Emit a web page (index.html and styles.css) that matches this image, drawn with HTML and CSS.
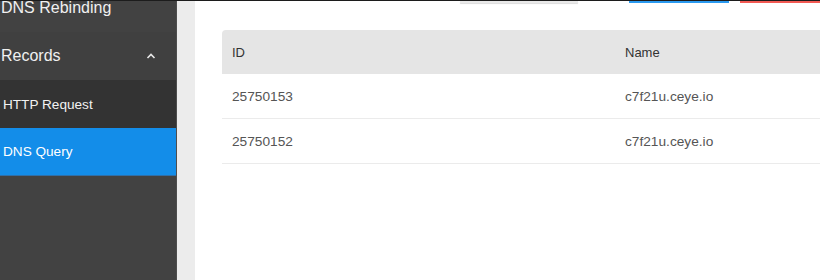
FILE: index.html
```html
<!DOCTYPE html>
<html>
<head>
<meta charset="utf-8">
<link rel="stylesheet" href="styles.css">
</head>
<body>
<div class="topline"></div>
<div class="layout">
  <nav class="sidebar">
    <div class="nav-item">DNS Rebinding</div>
    <div class="nav-item nav-group">
      <span>Records</span>
      <svg class="chev" width="10" height="6" viewBox="0 0 10 6"><polyline points="1.5,5 5,1.5 8.5,5" fill="none" stroke="#e8e8e8" stroke-width="1.6"/></svg>
    </div>
    <div class="nav-sub">HTTP Request</div>
    <div class="nav-sub active">DNS Query</div>
  </nav>
  <div class="gutter"></div>
  <main class="panel">
    <div class="toolbar">
      <div class="btn btn-gray"></div>
      <div class="btn btn-blue"></div>
      <div class="btn btn-red"></div>
    </div>
    <table class="records">
      <thead>
        <tr><th class="col-id">ID</th><th>Name</th></tr>
      </thead>
      <tbody>
        <tr><td>25750153</td><td>c7f21u.ceye.io</td></tr>
        <tr><td>25750152</td><td>c7f21u.ceye.io</td></tr>
      </tbody>
    </table>
  </main>
</div>
</body>
</html>
```
FILE: styles.css
```css
html, body {
  margin: 0;
  padding: 0;
  height: 100%;
  overflow: hidden;
  font-family: "Liberation Sans", Arial, sans-serif;
}
.topline {
  height: 1px;
  background: #1c1c1c;
}
.layout {
  display: flex;
  height: 279px;
}
.sidebar {
  width: 176px;
  background: #424242;
  border-right: 1px solid #4e4e4e;
  color: #fff;
  flex: none;
}
.nav-item {
  height: 48px;
  display: flex;
  align-items: center;
  padding-left: 1px;
  font-size: 16px;
  color: #f0f0f0;
}
.nav-item:first-child {
  margin-top: -17px;
}
.nav-group {
  justify-content: space-between;
  padding-right: 20px;
  background: #404040;
}
.chev {
  display: block;
}
.nav-sub {
  height: 48px;
  display: flex;
  align-items: center;
  padding-left: 3px;
  font-size: 13.6px;
  color: #f2f2f2;
  background: #333333;
}
.nav-sub.active {
  background: #138de9;
  color: #fff;
  border-bottom: 1px solid #2f6fa8;
  height: 47px;
}
.gutter {
  width: 18px;
  background: #ececec;
  flex: none;
}
.panel {
  flex: 1;
  min-width: 0;
  background: #fff;
  padding: 0 0 0 27px;
  overflow: hidden;
}
.toolbar {
  display: flex;
  height: 2px;
  margin-left: 238px;
}
.btn {
  height: 2px;
  flex: none;
}
.btn-gray {
  width: 118px;
  background: #e9e9e9;
  box-shadow: 0 1px 1px #dcdcdc;
}
.btn-blue {
  width: 100px;
  margin-left: 51px;
  background: #2b9af0;
}
.btn-red {
  width: 90px;
  margin-left: 11px;
  background: #f25a54;
}
.records {
  margin-top: 27px;
  width: 640px;
  border-collapse: collapse;
  font-size: 13.7px;
}
.records th {
  background: #e5e5e5;
  color: #333;
  font-weight: normal;
  text-align: left;
  height: 44px;
  padding: 0 10px;
  font-size: 13px;
}
.records th.col-id {
  width: 373px;
  border-top-left-radius: 4px;
}
.records td {
  height: 44px;
  padding: 0 10px;
  color: #555;
  border-bottom: 1px solid #ebebeb;
}
```
